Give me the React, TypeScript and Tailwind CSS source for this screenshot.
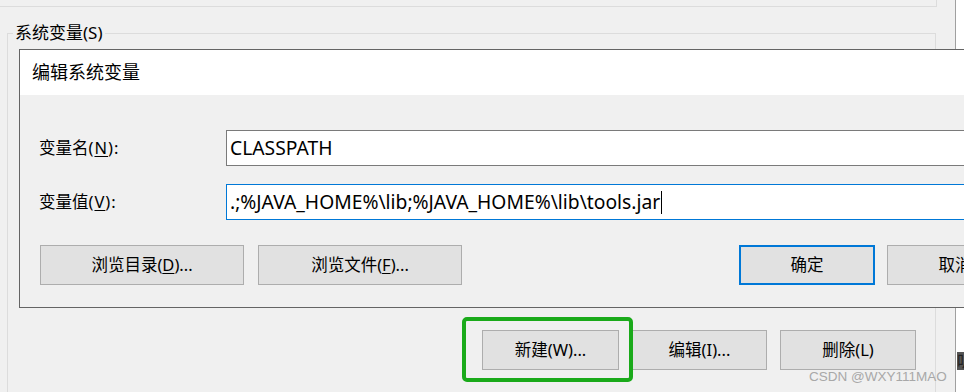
const ui = "font-['Noto_Sans','Noto_Sans_CJK_SC',sans-serif]"

function WinButton({
  children,
  className = "",
  primary,
}: {
  children: React.ReactNode
  className?: string
  primary?: boolean
}) {
  return (
    <div
      className={`h-[40px] shrink-0 flex items-center justify-center bg-[#e1e1e1] text-[16.5px] text-black ${
        primary ? "border-2 border-[#0078d7]" : "border border-[#adadad]"
      } ${className}`}
    >
      {children}
    </div>
  )
}

function Field({
  label,
  hotkey,
  value,
  focused,
}: {
  label: string
  hotkey: string
  value: string
  focused?: boolean
}) {
  return (
    <div className="flex items-center">
      <div className="w-[206px] shrink-0 pl-[19px] text-[16.5px] text-black">
        {label}
        <span className="tracking-[1px]">
          (<span className="underline underline-offset-2">{hotkey}</span>):
        </span>
      </div>
      <div
        className={`flex-1 min-w-0 h-[36px] bg-white border flex items-center pl-[3px] text-[19.3px] text-black whitespace-nowrap ${
          focused ? "border-[#0078d7]" : "border-[#7a7a7a]"
        }`}
      >
        <span>{value}</span>
        {focused && <span className="ml-px w-px h-[23px] bg-black" />}
      </div>
    </div>
  )
}

export default function App() {
  return (
    <div className={`relative w-[964px] h-[392px] overflow-hidden flex bg-white ${ui}`}>
      {/* window behind the dialog */}
      <div className="relative w-[956px] h-full bg-[#f0f0f0] border-r border-[#a0a0a0] shrink-0">
        <div className="h-[7px] w-[937px] border-b border-r border-[#dcdcdc]" />
        <fieldset className="mt-[15px] ml-[7px] w-[929px] h-[420px] border border-[#dcdcdc] pl-[5px] pr-[19px]">
          <legend className="px-[2px] text-[17px] leading-[22px] text-black">系统变量(S)</legend>
          <div className="mt-[286px] flex justify-end gap-[13px]">
            <WinButton className="w-[137px]">新建(W)...</WinButton>
            <WinButton className="w-[135px]">编辑(I)...</WinButton>
            <WinButton className="w-[136px]">删除(L)</WinButton>
          </div>
        </fieldset>
      </div>
      <div className="flex-1 relative">
        <div className="absolute left-[1px] top-[352px] text-[16px] leading-[18px] text-[#222] bg-[#555]">
          叭
        </div>
      </div>

      {/* edit dialog */}
      <div className="absolute left-[19px] top-[49px] w-[1000px] h-[259px] border border-[#646464] bg-[#f0f0f0] flex flex-col">
        <div className="h-[45px] bg-white flex items-center pl-[12px] text-[18px] text-black">
          编辑系统变量
        </div>
        <div className="pt-[35px] flex flex-col gap-[18px]">
          <Field label="变量名" hotkey="N" value="CLASSPATH" />
          <Field
            label="变量值"
            hotkey="V"
            value=".;%JAVA_HOME%\lib;%JAVA_HOME%\lib\tools.jar"
            focused
          />
        </div>
        <div className="mt-[25px] flex pl-[20px]">
          <WinButton className="w-[204px]">
            浏览目录(<span className="underline underline-offset-2">D</span>)...
          </WinButton>
          <WinButton className="w-[204px] ml-[14px]">
            浏览文件(<span className="underline underline-offset-2">F</span>)...
          </WinButton>
          <WinButton primary className="w-[136px] ml-[277px]">
            确定
          </WinButton>
          <WinButton className="w-[136px] ml-[12px]">取消</WinButton>
        </div>
      </div>

      {/* annotation */}
      <div className="absolute left-[462px] top-[317px] w-[171px] h-[65px] border-4 border-[#1aaa1a] rounded-[5px]" />
      <div className="absolute left-[809px] top-[369px] text-[13.5px] leading-[16px] text-[#a8a8a8] font-['Liberation_Sans',sans-serif]">
        CSDN @WXY111MAO
      </div>
    </div>
  )
}
